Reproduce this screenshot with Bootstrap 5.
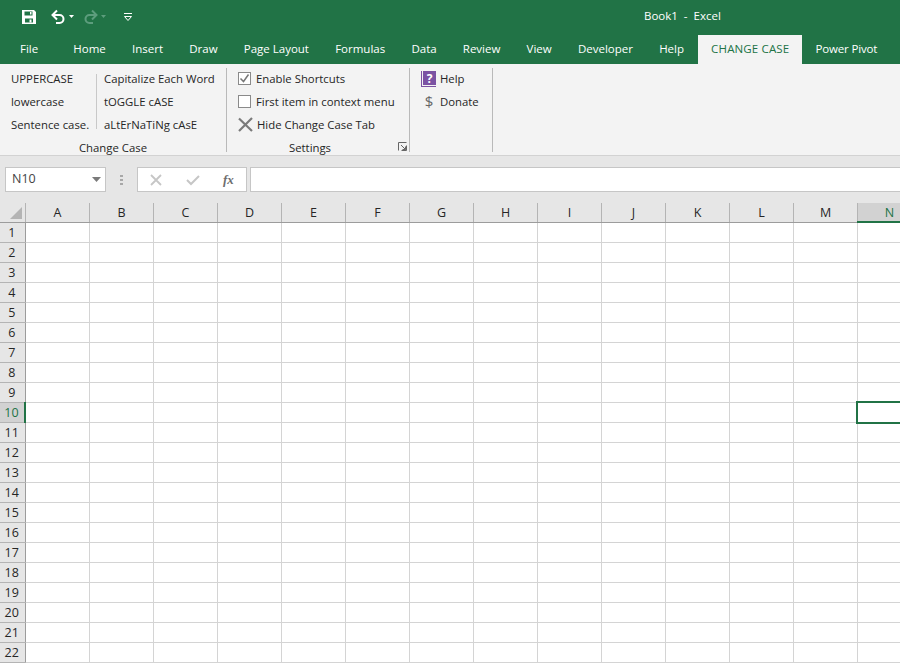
<!DOCTYPE html>
<html lang="en"><head><meta charset="utf-8"><title>Book1 - Excel</title>
<link href="https://cdn.jsdelivr.net/npm/bootstrap@5.3.0/dist/css/bootstrap.min.css" rel="stylesheet">
<style>
html,body{height:663px;overflow:hidden}
body{font-family:"Open Sans","Noto Sans",sans-serif;font-size:11.35px;color:#262626;background:#fff;width:900px}
.xl-title{height:35px;background:#217346;color:#fff;font-size:11.5px;padding-bottom:2px}
.qat-save{margin-left:21px}
.qat-undo{margin-left:13px}
.qat-redo{margin-left:9px}
.qat-more{margin-left:16px}
.xl-name{margin-left:511px;margin-top:-2px;white-space:pre}
.xl-tabs{height:29px;background:#217346;color:#fff;padding-left:7px;font-size:11.5px}
.xl-tab{color:#fff;text-decoration:none;padding:0 13.1px;line-height:27px;height:29px;display:block}
.xl-tab.first{padding:0 22px 0 13px}
.xl-tab.on{background:#f3f3f3;color:#217346;padding:0 13px;margin-left:1px;letter-spacing:.15px}
.xl-tab.last{letter-spacing:-.15px}
.xl-ribbon{height:92px;background:#f3f3f3;border-bottom:1px solid #d2d2d2}
.grp{height:84px;margin-top:4px;border-right:1px solid #b9b9b9;position:relative}
.grp-case{width:227px}.grp-set{width:183px}.grp-help{width:83px}
.grp-body{height:72px}
.grp-cap{height:12px;line-height:16px;text-align:center}
.grp-set .grp-cap{padding-right:16px}
.col-a{width:96px;height:69px;padding-left:11px}
.col-b{padding-left:7px;border-left:1px solid #c8c8c8;height:55px;margin-top:6px}
.col-b .rb:first-child{margin-top:-6px}
.rb{height:23px;line-height:19px;padding:1px 0 3px;white-space:nowrap}
.col-set{padding-left:11px}
.col-help{padding-left:11px}
.ck{width:13px;height:13px;border:1px solid #8a8a8a;background:#fff;margin-right:5px;flex:none}
.ico-x{margin-right:4px;flex:none}
.ico-help{width:15px;height:16px;margin-right:4px;flex:none;border-left:1px solid #7b52a3;border-bottom:1px solid #7b52a3;padding:0 0 1px 1px;background-clip:content-box;background-color:#7b52a3;color:#fff;font-size:12px;font-weight:700;line-height:15px;text-align:center}
.dollar{width:19px;padding-right:3px;text-align:center;color:#666;font-size:15px;flex:none}
.launch{position:absolute;right:2px;bottom:1px}
.xl-strip{height:47px;background:#e6e6e6;padding:11px 0 0 5px}
.xl-box{height:25px;background:#fff;border:1px solid #c6c6c6}
.name-box{width:101px;padding:0 4px 0 6px;font-size:12.5px;color:#444}
.grip{width:31px}
.fx-box{width:110px}
.fx-a{margin-left:12px}
.fx-b{margin-left:24px}
.fx-c{margin-left:23px;font-family:"Liberation Serif",serif;font-style:italic;font-weight:700;font-size:13px;color:#6e6e6e}
.fx-in{flex:1;margin-left:3px;border-right:0}
.sheet{border-collapse:collapse;table-layout:fixed;width:921px;background:#fff}
.sheet-wrap{width:900px;height:460px;overflow:hidden;position:relative}
.sheet th{background:#e6e6e6;font-weight:400;text-align:center;padding:0;color:#262626;font-size:12.5px}
.sheet thead th{height:18px;line-height:17px;padding:1px 0 0 1px;border-right:1px solid #b4b4b4;border-bottom:1px solid #9c9c9c}
.sheet tbody th{height:20px;line-height:18px;padding:1px 1px 0 0;border-right:1px solid #9c9c9c;border-bottom:1px solid #b4b4b4}
.sheet td{height:20px;border-right:1px solid #d4d4d4;border-bottom:1px solid #d4d4d4;padding:0}
.sheet .corner{width:25px;position:relative}
.sheet .c{width:64px}
.sheet thead th.act{background:#d2d2d2;color:#217346;border-bottom:2px solid #217346}
.sheet tbody th.act{background:#d2d2d2;color:#217346;border-right:2px solid #217346}
.tri{position:absolute;right:3px;bottom:3px}
.sel{position:absolute;left:856px;top:198px;width:60px;height:23px;border:2px solid #217346;box-sizing:border-box}
</style></head><body>
<header class="xl-title d-flex align-items-center">
<svg class="qat-save" width="16" height="16" viewBox="0 0 16 16"><path fill="#fff" fill-rule="evenodd" d="M1 1h12l2 2v12H1zM3.500 2.500v4h8v-4zM4 9.500v4h8v-4z"/><rect x="9" y="3" width="1.500" height="2.500" fill="#fff"/><rect x="8.500" y="10.500" width="2" height="3" fill="#fff"/></svg>
<svg class="qat-undo" width="24" height="16" viewBox="0 0 24 16"><path fill="none" stroke="#fff" stroke-width="2" d="M7 1.500 2.500 6 7 10.500M3 6h6.500a4 4 0 0 1 0 8H6"/><path fill="#fff" d="M19 6h5l-2.500 3z"/></svg>
<svg class="qat-redo" width="24" height="16" viewBox="0 0 24 16"><path fill="none" stroke="#5d9d7d" stroke-width="2" d="M9 1.500 13.500 6 9 10.500M13 6H6.500a4 4 0 0 0 0 8H10"/><path fill="#5d9d7d" d="M18 6h5l-2.500 3z"/></svg>
<svg class="qat-more" width="10" height="12" viewBox="0 0 10 12"><path fill="none" stroke="#fff" d="M1 2.500h8"/><path fill="none" stroke="#fff" d="M1.500 5.500 5 9.500l3.500-4z"/></svg>
<div class="xl-name">Book1  -  Excel</div>
</header>
<nav class="xl-tabs d-flex">
<a class="xl-tab first" href="#">File</a><a class="xl-tab" href="#">Home</a><a class="xl-tab" href="#">Insert</a><a class="xl-tab" href="#">Draw</a><a class="xl-tab" href="#">Page Layout</a><a class="xl-tab" href="#">Formulas</a><a class="xl-tab" href="#">Data</a><a class="xl-tab" href="#">Review</a><a class="xl-tab" href="#">View</a><a class="xl-tab" href="#">Developer</a><a class="xl-tab" href="#">Help</a><a class="xl-tab on" href="#">CHANGE CASE</a><a class="xl-tab last" href="#">Power Pivot</a>
</nav>
<section class="xl-ribbon d-flex">
<div class="grp grp-case">
<div class="grp-body d-flex">
<div class="col-a"><div class="rb">UPPERCASE</div><div class="rb">lowercase</div><div class="rb">Sentence case.</div></div>
<div class="col-b"><div class="rb">Capitalize Each Word</div><div class="rb">tOGGLE cASE</div><div class="rb">aLtErNaTiNg cAsE</div></div>
</div>
<div class="grp-cap">Change Case</div>
</div>
<div class="grp grp-set">
<div class="grp-body col-set">
<div class="rb d-flex align-items-center"><span class="ck d-flex align-items-center justify-content-center"><svg width="11" height="11" viewBox="0 0 11 11"><path fill="none" stroke="#777" stroke-width="1.500" d="M1.500 5.500 4.500 8.500 9.500 1.500"/></svg></span>Enable Shortcuts</div>
<div class="rb d-flex align-items-center"><span class="ck"></span>First item in context menu</div>
<div class="rb d-flex align-items-center"><svg class="ico-x" width="15" height="15" viewBox="0 0 15 15"><path stroke="#7a7a7a" stroke-width="2.200" d="M1 1.500 14 14M14 1 1 14"/></svg>Hide Change Case Tab</div>
</div>
<div class="grp-cap">Settings</div>
<svg class="launch" width="9" height="9" viewBox="0 0 9 9"><path fill="none" stroke="#666" d="M.5 8.500v-8h8M8.500 3.500v5h-5M3 3l4.500 4.500M7.500 4.500v3h-3"/></svg>
</div>
<div class="grp grp-help">
<div class="grp-body col-help">
<div class="rb d-flex align-items-center"><span class="ico-help">?</span>Help</div>
<div class="rb d-flex align-items-center"><span class="dollar">$</span>Donate</div>
</div>
</div>
</section>
<section class="xl-strip d-flex">
<div class="xl-box name-box d-flex align-items-center justify-content-between"><span>N10</span><svg width="9" height="5" viewBox="0 0 9 5"><path fill="#7a7a7a" d="M0 0h9L4.500 5z"/></svg></div>
<div class="grip d-flex justify-content-center pt-2"><svg width="3" height="11" viewBox="0 0 3 11"><path fill="#a8a8a8" d="M0 0h3v2H0zM0 4h3v2H0zM0 8h3v2H0z"/></svg></div>
<div class="xl-box fx-box d-flex align-items-center">
<svg class="fx-a" width="12" height="12" viewBox="0 0 12 12"><path stroke="#c6c6c6" stroke-width="1.800" d="M1 1l10 10M11 1 1 11"/></svg>
<svg class="fx-b" width="14" height="12" viewBox="0 0 14 12"><path fill="none" stroke="#c6c6c6" stroke-width="2" d="M1 6l4 4 8-8"/></svg>
<span class="fx-c">fx</span>
</div>
<div class="xl-box fx-in"></div>
</section>
<main class="sheet-wrap">
<table class="sheet">
<thead><tr><th class="corner"><svg class="tri" width="12" height="12" viewBox="0 0 12 12"><path fill="#b4b4b4" d="M12 0v12H0z"/></svg></th><th class="c">A</th><th class="c">B</th><th class="c">C</th><th class="c">D</th><th class="c">E</th><th class="c">F</th><th class="c">G</th><th class="c">H</th><th class="c">I</th><th class="c">J</th><th class="c">K</th><th class="c">L</th><th class="c">M</th><th class="c act">N</th></tr></thead>
<tbody>
<tr><th>1</th><td></td><td></td><td></td><td></td><td></td><td></td><td></td><td></td><td></td><td></td><td></td><td></td><td></td><td></td></tr>
<tr><th>2</th><td></td><td></td><td></td><td></td><td></td><td></td><td></td><td></td><td></td><td></td><td></td><td></td><td></td><td></td></tr>
<tr><th>3</th><td></td><td></td><td></td><td></td><td></td><td></td><td></td><td></td><td></td><td></td><td></td><td></td><td></td><td></td></tr>
<tr><th>4</th><td></td><td></td><td></td><td></td><td></td><td></td><td></td><td></td><td></td><td></td><td></td><td></td><td></td><td></td></tr>
<tr><th>5</th><td></td><td></td><td></td><td></td><td></td><td></td><td></td><td></td><td></td><td></td><td></td><td></td><td></td><td></td></tr>
<tr><th>6</th><td></td><td></td><td></td><td></td><td></td><td></td><td></td><td></td><td></td><td></td><td></td><td></td><td></td><td></td></tr>
<tr><th>7</th><td></td><td></td><td></td><td></td><td></td><td></td><td></td><td></td><td></td><td></td><td></td><td></td><td></td><td></td></tr>
<tr><th>8</th><td></td><td></td><td></td><td></td><td></td><td></td><td></td><td></td><td></td><td></td><td></td><td></td><td></td><td></td></tr>
<tr><th>9</th><td></td><td></td><td></td><td></td><td></td><td></td><td></td><td></td><td></td><td></td><td></td><td></td><td></td><td></td></tr>
<tr><th class="act">10</th><td></td><td></td><td></td><td></td><td></td><td></td><td></td><td></td><td></td><td></td><td></td><td></td><td></td><td></td></tr>
<tr><th>11</th><td></td><td></td><td></td><td></td><td></td><td></td><td></td><td></td><td></td><td></td><td></td><td></td><td></td><td></td></tr>
<tr><th>12</th><td></td><td></td><td></td><td></td><td></td><td></td><td></td><td></td><td></td><td></td><td></td><td></td><td></td><td></td></tr>
<tr><th>13</th><td></td><td></td><td></td><td></td><td></td><td></td><td></td><td></td><td></td><td></td><td></td><td></td><td></td><td></td></tr>
<tr><th>14</th><td></td><td></td><td></td><td></td><td></td><td></td><td></td><td></td><td></td><td></td><td></td><td></td><td></td><td></td></tr>
<tr><th>15</th><td></td><td></td><td></td><td></td><td></td><td></td><td></td><td></td><td></td><td></td><td></td><td></td><td></td><td></td></tr>
<tr><th>16</th><td></td><td></td><td></td><td></td><td></td><td></td><td></td><td></td><td></td><td></td><td></td><td></td><td></td><td></td></tr>
<tr><th>17</th><td></td><td></td><td></td><td></td><td></td><td></td><td></td><td></td><td></td><td></td><td></td><td></td><td></td><td></td></tr>
<tr><th>18</th><td></td><td></td><td></td><td></td><td></td><td></td><td></td><td></td><td></td><td></td><td></td><td></td><td></td><td></td></tr>
<tr><th>19</th><td></td><td></td><td></td><td></td><td></td><td></td><td></td><td></td><td></td><td></td><td></td><td></td><td></td><td></td></tr>
<tr><th>20</th><td></td><td></td><td></td><td></td><td></td><td></td><td></td><td></td><td></td><td></td><td></td><td></td><td></td><td></td></tr>
<tr><th>21</th><td></td><td></td><td></td><td></td><td></td><td></td><td></td><td></td><td></td><td></td><td></td><td></td><td></td><td></td></tr>
<tr><th>22</th><td></td><td></td><td></td><td></td><td></td><td></td><td></td><td></td><td></td><td></td><td></td><td></td><td></td><td></td></tr>
</tbody></table>
<div class="sel"></div>
</main>
<script src="https://cdn.jsdelivr.net/npm/bootstrap@5.3.0/dist/js/bootstrap.bundle.min.js"></script>
</body></html>
